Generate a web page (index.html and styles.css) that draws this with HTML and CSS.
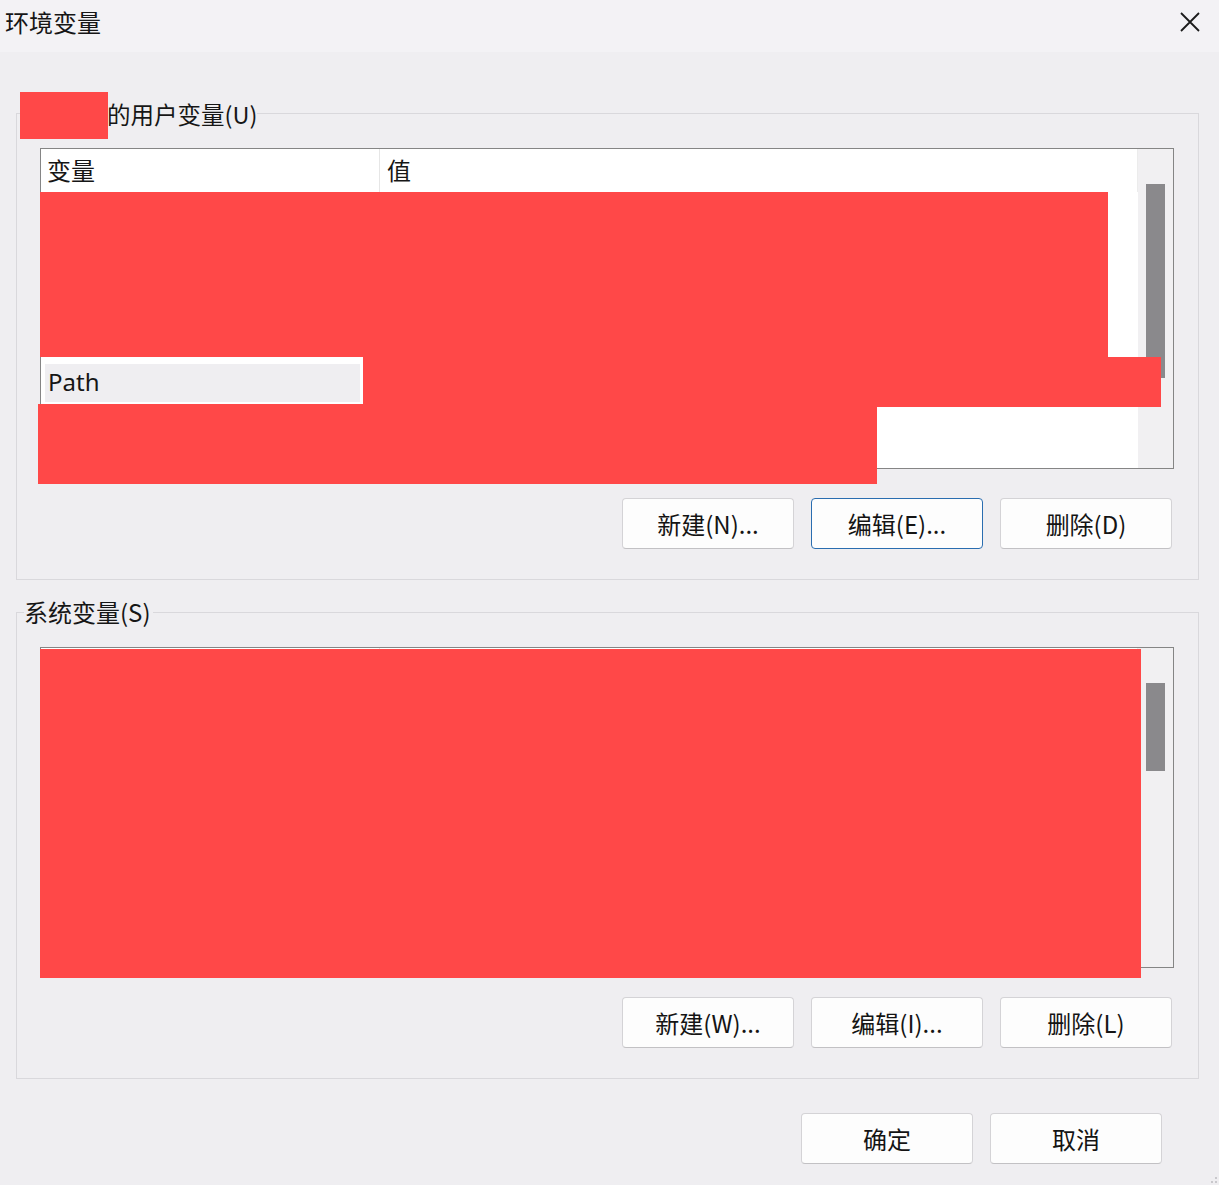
FILE: index.html
```html
<!DOCTYPE html>
<html lang="zh-CN">
<head>
<meta charset="utf-8">
<title>环境变量</title>
<link rel="stylesheet" href="styles.css">
</head>
<body>
<div class="window">
  <header class="titlebar">
    <span class="title">环境变量</span>
    <svg class="close" width="20" height="20" viewBox="0 0 20 20"><path d="M1 1 L19 19 M19 1 L1 19" stroke="#1a1a1a" stroke-width="1.8" fill="none"/></svg>
  </header>
  <main class="main">
    <fieldset class="group">
      <legend class="legend legend-user"><span class="redact redact-name"></span>的用户变量(U)</legend>
      <div class="group-body">
        <div class="list list-user">
          <div class="list-main">
            <div class="list-head">
              <div class="col col-name">变量</div>
              <div class="col col-value">值</div>
            </div>
            <div class="row"></div>
            <div class="row"></div>
            <div class="row"></div>
            <div class="row"></div>
            <div class="path-row"><div class="path-cell">Path</div></div>
          </div>
          <div class="scrollbar"><div class="thumb thumb-user"></div></div>
          <div class="redact r-u1"></div>
          <div class="redact r-u2"></div>
          <div class="redact r-u3"></div>
        </div>
        <div class="btn-row">
          <button class="btn">新建(N)...</button>
          <button class="btn btn-focus">编辑(E)...</button>
          <button class="btn">删除(D)</button>
        </div>
      </div>
    </fieldset>

    <fieldset class="group group-sys">
      <legend class="legend legend-sys">系统变量(S)</legend>
      <div class="group-body">
        <div class="list list-sys">
          <div class="list-main">
            <div class="list-head">
              <div class="col col-name">变量</div>
              <div class="col col-value">值</div>
            </div>
          </div>
          <div class="scrollbar"><div class="thumb thumb-sys"></div></div>
          <div class="redact r-s1"></div>
        </div>
        <div class="btn-row">
          <button class="btn">新建(W)...</button>
          <button class="btn">编辑(I)...</button>
          <button class="btn">删除(L)</button>
        </div>
      </div>
    </fieldset>

    <div class="dialog-actions">
      <button class="btn">确定</button>
      <button class="btn">取消</button>
    </div>
  </main>
  <svg class="grip" width="8" height="8" viewBox="0 0 8 8"><rect x="5" y="1" width="2" height="2" fill="#c9c8cc"/><rect x="1" y="5" width="2" height="2" fill="#c9c8cc"/><rect x="5" y="5" width="2" height="2" fill="#c9c8cc"/></svg>
</div>
</body>
</html>
```
FILE: styles.css
```css
* { box-sizing: border-box; }

html, body {
  margin: 0;
  padding: 0;
}

body {
  background: #efeef1;
  font-family: "Noto Sans CJK SC", "Noto Sans", sans-serif;
  color: #161616;
  width: 1219px;
  height: 1185px;
  overflow: hidden;
}

.window {
  position: relative;
  height: 1185px;
}

.titlebar {
  height: 52px;
  background: #f3f2f5;
  display: flex;
  justify-content: space-between;
  align-items: flex-start;
}

.title {
  font-size: 24px;
  line-height: 44px;
  padding-left: 5px;
}

.close {
  margin-top: 12px;
  margin-right: 19px;
}

.main {
  padding: 40px 20px 0 16px;
}

.group {
  margin: 0;
  padding: 0;
  border: 1px solid #d9d8dc;
  min-width: 0;
}

.group-sys {
  margin-top: 16px;
}

.legend {
  padding: 0;
  display: flex;
  align-items: center;
  font-size: 24px;
  line-height: 32px;
}

.legend-user {
  margin-left: 3px;
  font-size: 23.5px;
}

.legend-sys {
  margin-left: 7px;
  padding-right: 2px;
}

.redact {
  background: #ff4848;
}

.redact-name {
  display: inline-block;
  width: 88px;
  height: 47px;
  margin-right: -1px;
  margin-bottom: -4px;
}

.group-body {
  padding: 0 24px 30px 23px;
}

.list {
  position: relative;
  height: 321px;
  border: 1px solid #858585;
  background: #ffffff;
  display: flex;
}

.list-user { margin-top: 13px; }
.list-sys { margin-top: 19px; }

.list-main {
  flex: 1;
  min-width: 0;
}

.list-head {
  height: 43px;
  display: flex;
  border-right: 1px solid #ececec;
}

.col {
  font-size: 24px;
  line-height: 42px;
  padding-left: 7px;
}

.col-name {
  width: 339px;
  border-right: 1px solid #e6e6e6;
  padding-left: 6px;
}

.col-value {
  flex: 1;
}

.row {
  height: 41px;
}

.path-row {
  width: 322px;
  height: 48px;
  background: #ffffff;
  padding: 8px 3px 2px 4px;
}

.path-cell {
  height: 38px;
  background: #efeef1;
  font-family: "Noto Sans", sans-serif;
  font-size: 24px;
  line-height: 36px;
  padding-left: 3px;
}

.scrollbar {
  width: 35px;
  background: #f1f0f2;
  padding-left: 8px;
  padding-top: 35px;
}

.thumb {
  width: 19px;
  background: #8a898c;
}

.thumb-user { height: 194px; }
.thumb-sys { height: 88px; }

.list .redact {
  position: absolute;
}

.r-u1 { left: -1px; top: 43px; width: 1068px; height: 165px; }
.r-u2 { left: 322px; top: 208px; width: 798px; height: 50px; }
.r-u3 { left: -3px; top: 255px; width: 839px; height: 80px; }
.r-s1 { left: -1px; top: 1px; width: 1101px; height: 329px; }

.btn-row {
  display: flex;
  justify-content: flex-end;
  gap: 17px;
  margin-top: 29px;
  margin-right: 2px;
}

.btn {
  width: 172px;
  height: 51px;
  border: 1px solid #d4d3d6;
  border-bottom-color: #c2c1c4;
  border-radius: 4px;
  background: #fdfdfd;
  font-family: "Noto Sans CJK SC", "Noto Sans", sans-serif;
  font-size: 24px;
  color: #141414;
  padding: 0;
}

.btn-focus {
  border-color: #2a6db0;
}

.dialog-actions {
  display: flex;
  justify-content: flex-end;
  gap: 17px;
  margin-top: 34px;
  margin-right: 37px;
}

.grip {
  position: absolute;
  right: 1px;
  bottom: 1px;
}
```
